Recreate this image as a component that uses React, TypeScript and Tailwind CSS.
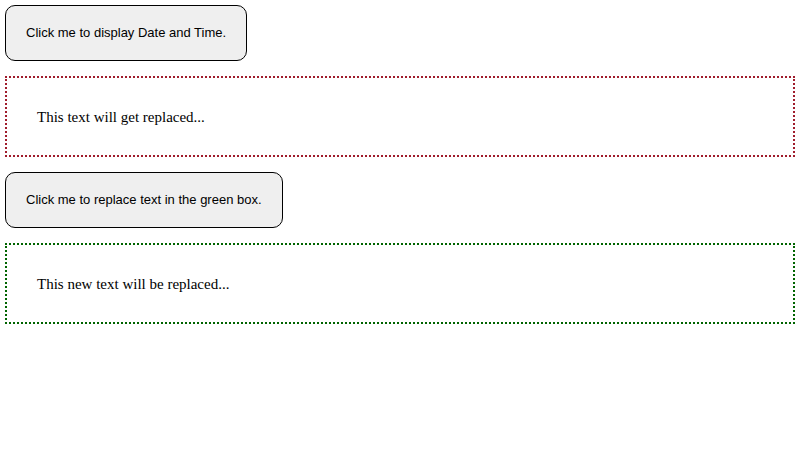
export default function App() {
  return (
    <div className="flex flex-col p-[5px] font-['Liberation_Serif',serif] text-black">
      <button
        type="button"
        className="self-start h-[56px] px-[20px] rounded-[10px] border border-black bg-[#efefef] font-['Liberation_Sans',Arial,sans-serif] text-[13px]"
      >
        Click me to display Date and Time.
      </button>
      <div className="mt-[15px] h-[81px] border-2 border-dotted border-[#a01c2c] px-[30px] py-[31px] text-[15px] leading-[17px]">
        This text will get replaced...
      </div>
      <button
        type="button"
        className="self-start mt-[15px] h-[56px] px-[20px] rounded-[10px] border border-black bg-[#efefef] font-['Liberation_Sans',Arial,sans-serif] text-[13px]"
      >
        Click me to replace text in the green box.
      </button>
      <div className="mt-[15px] h-[81px] border-2 border-dotted border-[#006400] px-[30px] py-[31px] text-[15px] leading-[17px]">
        This new text will be replaced...
      </div>
    </div>
  )
}
